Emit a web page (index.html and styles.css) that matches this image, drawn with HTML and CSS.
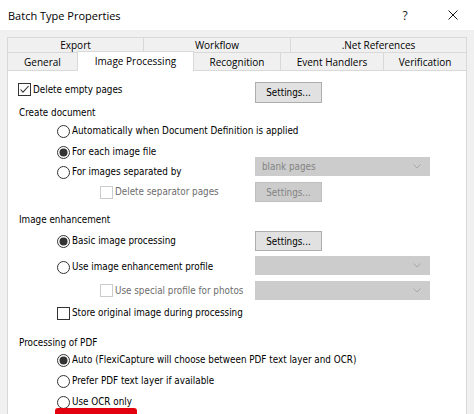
FILE: index.html
```html
<!DOCTYPE html>
<html>
<head>
<meta charset="utf-8">
<link rel="stylesheet" href="styles.css">
</head>
<body>
<div class="window">
  <div class="titlebar">
    <span class="title">Batch Type Properties</span>
    <span class="spacer"></span>
    <span class="help">?</span>
    <span class="close"><svg width="10" height="10" viewBox="0 0 10 10"><path d="M0.5 0.5 L9.5 9.5 M9.5 0.5 L0.5 9.5" stroke="#1a1a1a" stroke-width="1" fill="none"/></svg></span>
  </div>
  <div class="dialog">
    <div class="tabrow back">
      <div class="tab w136">Export</div>
      <div class="tab w147">Workflow</div>
      <div class="tab w177 last">.Net References</div>
    </div>
    <div class="tabrow front">
      <div class="tab w70">General</div>
      <div class="tab w117 sel">Image Processing</div>
      <div class="tab w86">Recognition</div>
      <div class="tab w103">Event Handlers</div>
      <div class="tab w84 last">Verification</div>
    </div>
    <div class="panel">
      <div class="row h21 mt11">
        <div class="lc l0 up3">
          <svg class="cb" width="13" height="13" viewBox="0 0 13 13"><rect x="0.5" y="0.5" width="12" height="12" fill="#fff" stroke="#333"/><path d="M2.5 6.5 L5 9.2 L10.6 3" stroke="#333" stroke-width="1.1" fill="none"/></svg>
          <span class="lbl">Delete empty pages</span>
        </div>
        <div class="btn h21">Settings...</div>
      </div>
      <div class="row h14 mt3"><div class="lc lg">Create document</div></div>
      <div class="row h14 mt4">
        <div class="lc l1">
          <svg class="rb" width="13" height="13" viewBox="0 0 13 13"><circle cx="6.5" cy="6.5" r="6" fill="#fff" stroke="#333"/></svg>
          <span class="lbl">Automatically when Document Definition is applied</span>
        </div>
      </div>
      <div class="row h14 mt7">
        <div class="lc l1">
          <svg class="rb" width="13" height="13" viewBox="0 0 13 13"><circle cx="6.5" cy="6.5" r="6" fill="#fff" stroke="#333"/><circle cx="6.5" cy="6.5" r="4" fill="#333"/></svg>
          <span class="lbl">For each image file</span>
        </div>
      </div>
      <div class="row h19 mtn2">
        <div class="lc l1 dn11">
          <svg class="rb" width="13" height="13" viewBox="0 0 13 13"><circle cx="6.5" cy="6.5" r="6" fill="#fff" stroke="#333"/></svg>
          <span class="lbl">For images separated by</span>
        </div>
        <div class="dd"><span>blank pages</span><svg width="8" height="5" viewBox="0 0 8 5"><path d="M0.5 0.5 L4 4 L7.5 0.5" stroke="#a8a8a8" fill="none"/></svg></div>
      </div>
      <div class="row h20 mt6">
        <div class="lc l2">
          <svg class="cb" width="13" height="13" viewBox="0 0 13 13"><rect x="0.5" y="0.5" width="12" height="12" fill="#fff" stroke="#cccccc"/></svg>
          <span class="lbl dis">Delete separator pages</span>
        </div>
        <div class="btn h20 disabled">Settings...</div>
      </div>
      <div class="row h14 mt11"><div class="lc lg">Image enhancement</div></div>
      <div class="row h20 mt4">
        <div class="lc l1">
          <svg class="rb" width="13" height="13" viewBox="0 0 13 13"><circle cx="6.5" cy="6.5" r="6" fill="#fff" stroke="#333"/><circle cx="6.5" cy="6.5" r="4" fill="#333"/></svg>
          <span class="lbl">Basic image processing</span>
        </div>
        <div class="btn h20">Settings...</div>
      </div>
      <div class="row h19 mt5">
        <div class="lc l1 dn3">
          <svg class="rb" width="13" height="13" viewBox="0 0 13 13"><circle cx="6.5" cy="6.5" r="6" fill="#fff" stroke="#333"/></svg>
          <span class="lbl">Use image enhancement profile</span>
        </div>
        <div class="dd"><span></span><svg width="8" height="5" viewBox="0 0 8 5"><path d="M0.5 0.5 L4 4 L7.5 0.5" stroke="#a8a8a8" fill="none"/></svg></div>
      </div>
      <div class="row h19 mt6">
        <div class="lc l2">
          <svg class="cb" width="13" height="13" viewBox="0 0 13 13"><rect x="0.5" y="0.5" width="12" height="12" fill="#fff" stroke="#cccccc"/></svg>
          <span class="lbl dis">Use special profile for photos</span>
        </div>
        <div class="dd"><span></span><svg width="8" height="5" viewBox="0 0 8 5"><path d="M0.5 0.5 L4 4 L7.5 0.5" stroke="#a8a8a8" fill="none"/></svg></div>
      </div>
      <div class="row h14 mt6">
        <div class="lc l1 wide">
          <svg class="cb" width="13" height="13" viewBox="0 0 13 13"><rect x="0.5" y="0.5" width="12" height="12" fill="#fff" stroke="#333"/></svg>
          <span class="lbl">Store original image during processing</span>
        </div>
      </div>
      <div class="row h14 mt16"><div class="lc lg">Processing of PDF</div></div>
      <div class="row h14 mt3">
        <div class="lc l1 wide">
          <svg class="rb" width="13" height="13" viewBox="0 0 13 13"><circle cx="6.5" cy="6.5" r="6" fill="#fff" stroke="#333"/><circle cx="6.5" cy="6.5" r="4" fill="#333"/></svg>
          <span class="lbl">Auto (FlexiCapture will choose between PDF text layer and OCR)</span>
        </div>
      </div>
      <div class="row h14 mt7">
        <div class="lc l1 wide">
          <svg class="rb" width="13" height="13" viewBox="0 0 13 13"><circle cx="6.5" cy="6.5" r="6" fill="#fff" stroke="#333"/></svg>
          <span class="lbl">Prefer PDF text layer if available</span>
        </div>
      </div>
      <div class="row h14 mt7">
        <div class="lc l1 wide">
          <svg class="rb" width="13" height="13" viewBox="0 0 13 13"><circle cx="6.5" cy="6.5" r="6" fill="#fff" stroke="#333"/></svg>
          <span class="lbl">Use OCR only</span>
        </div>
      </div>
      <div class="redmark"></div>
    </div>
  </div>
</div>
</body>
</html>
```
FILE: styles.css
```css
html, body {
  margin: 0;
  padding: 0;
  background: #f0f0f0;
}
.window {
  width: 474px;
  height: 414px;
  overflow: hidden;
  background: #f0f0f0;
  font-family: "DejaVu Sans Condensed", "DejaVu Sans", sans-serif;
  font-stretch: condensed;
  font-size: 9.8px;
  color: #000;
}
.titlebar {
  height: 30px;
  background: #ffffff;
  display: flex;
  align-items: center;
  padding-left: 8px;
  padding-right: 16px;
  font-family: "Open Sans", sans-serif;
  font-stretch: normal;
}
.title {
  font-size: 11px;
  color: #000;
}
.spacer { flex: 1; }
.help {
  width: 10px;
  text-align: center;
  font-size: 12px;
  color: #1a1a1a;
  margin-right: 38px;
}
.close {
  display: flex;
  width: 10px;
  height: 10px;
}
.dialog {
  padding-top: 7px;
}
.tabrow {
  display: flex;
  margin-left: 7px;
  align-items: flex-start;
  font-family: "Open Sans", sans-serif;
  font-stretch: normal;
  font-size: 10px;
}
.back { height: 15px; }
.front { height: 18px; }
.tab {
  box-sizing: border-box;
  border-top: 1px solid #d9d9d9;
  border-left: 1px solid #d9d9d9;
  background: #f0f0f0;
  display: flex;
  align-items: center;
  justify-content: center;
  flex: none;
}
.back .tab { height: 15px; }
.front .tab { height: 18px; }
.tab.last { border-right: 1px solid #d9d9d9; }
.front .tab.sel {
  background: #ffffff;
  height: 20px;
  margin-top: -1px;
  border-right: 1px solid #d9d9d9;
  position: relative;
  z-index: 1;
  padding-bottom: 2px;
}
.front .tab.sel + .tab { border-left: none; }
.w70 { width: 70px; }
.w84 { width: 84px; }
.w86 { width: 86px; }
.w103 { width: 103px; }
.w117 { width: 117px; }
.w136 { width: 136px; }
.w147 { width: 147px; }
.w177 { width: 177px; }
.panel {
  position: relative;
  box-sizing: border-box;
  margin-left: 7px;
  width: 460px;
  height: 360px;
  background: #ffffff;
  border: 1px solid #d9d9d9;
  padding-top: 0.1px;
}
.row {
  display: flex;
  align-items: center;
}
.h14 { height: 14px; }
.h19 { height: 19px; }
.h20 { height: 20px; }
.h21 { height: 21px; }
.mt3 { margin-top: 3px; }
.mt4 { margin-top: 4px; }
.mt5 { margin-top: 5px; }
.mt6 { margin-top: 6px; }
.mt7 { margin-top: 7px; }
.mt11 { margin-top: 11px; }
.mt16 { margin-top: 16px; }
.mtn2 { margin-top: -2px; }
.lc {
  box-sizing: border-box;
  width: 247px;
  flex: none;
  display: flex;
  align-items: center;
  white-space: nowrap;
  line-height: 14px;
}
.lc.wide { width: 440px; }
.l0 { padding-left: 10px; }
.lg { padding-left: 11px; }
.l1 { padding-left: 49px; }
.l2 { padding-left: 92px; }
.up3 { margin-bottom: 6px; }
.dn11 { margin-top: 11px; }
.dn3 { margin-top: 3px; }
.cb, .rb {
  flex: none;
  display: block;
}
.lbl { margin-left: 2px; }
.lbl.dis { color: #6d6d6d; }
.btn {
  box-sizing: border-box;
  width: 67px;
  background: #e1e1e1;
  border: 1px solid #adadad;
  display: flex;
  align-items: center;
  justify-content: center;
  flex: none;
}
.btn.disabled {
  background: #cccccc;
  border-color: #bfbfbf;
  color: #838383;
}
.dd {
  box-sizing: border-box;
  width: 175px;
  height: 19px;
  background: #cccccc;
  border: 1px solid #cccccc;
  color: #838383;
  display: flex;
  align-items: center;
  justify-content: space-between;
  padding-left: 6px;
  padding-right: 8px;
  flex: none;
}
.dd svg { display: block; }
.redmark {
  position: absolute;
  left: 47px;
  top: 337px;
  width: 82px;
  height: 9px;
  background: #e3000f;
  border-radius: 3px;
}
```
